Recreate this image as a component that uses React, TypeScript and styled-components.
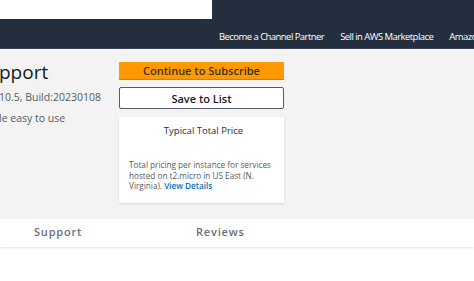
import React from "react";
import styled, { createGlobalStyle } from "styled-components";

const Global = createGlobalStyle`
  html, body { margin: 0; padding: 0; background: #ffffff; }
  body { font-family: "Open Sans", "Liberation Sans", sans-serif; overflow: hidden; }
  * { box-sizing: border-box; }
`;

const Page = styled.div`
  width: 474px;
  height: 281px;
  display: flex;
  flex-direction: column;
  overflow: hidden;
`;

const Header = styled.header`
  height: 49px;
  background: #232f3e;
  display: flex;
  flex-direction: column;
  border-bottom: 1px solid #3a4553;
`;

const SearchBox = styled.div`
  width: 212px;
  height: 19px;
  background: #ffffff;
`;

const Nav = styled.nav`
  flex: 1;
  display: flex;
  align-items: center;
  gap: 16px;
  padding-left: 219px;
  padding-top: 6px;
  white-space: nowrap;
  overflow: hidden;
`;

const NavLink = styled.span`
  color: #ffffff;
  font-size: 9.5px;
  letter-spacing: -0.55px;
`;

const Main = styled.main`
  height: 170px;
  background: #f3f3f3;
  display: flex;
`;

const LeftCol = styled.div`
  width: 119px;
  overflow: hidden;
  display: flex;
  flex-direction: column;
  padding-top: 10px;
`;

const Title = styled.h1`
  margin: 0 0 0 -1px;
  font-size: 19px;
  font-weight: 500;
  color: #16191f;
  line-height: 26px;
  white-space: nowrap;
`;

const Meta = styled.div<{ $top: number }>`
  margin-top: ${(p) => p.$top}px;
  margin-left: -1px;
  font-size: 10.5px;
  color: #545b64;
  line-height: 16px;
  white-space: nowrap;
`;

const RightCol = styled.div`
  width: 165px;
  padding-top: 13px;
  display: flex;
  flex-direction: column;
`;

const PrimaryButton = styled.div`
  height: 18px;
  background: #ff9900;
  border-bottom: 1px solid #ec7211;
  display: flex;
  align-items: center;
  justify-content: center;
  font-size: 11px;
  font-weight: 600;
  color: #3b2f1c;
`;

const SecondaryButton = styled.div`
  margin-top: 7px;
  height: 22px;
  background: #ffffff;
  border: 1px solid #545b64;
  border-radius: 2px;
  display: flex;
  align-items: center;
  justify-content: center;
  font-size: 11px;
  font-weight: 600;
  color: #16191f;
`;

const Card = styled.div`
  margin-top: 8px;
  height: 86px;
  background: #ffffff;
  box-shadow: 0 1px 2px rgba(0, 0, 0, 0.12);
  padding: 7px 6px 0 10px;
  display: flex;
  flex-direction: column;
`;

const CardTitle = styled.div`
  text-align: center;
  font-size: 9.5px;
  color: #232f3e;
  line-height: 14px;
`;

const CardText = styled.div`
  margin-top: 22px;
  font-size: 8.2px;
  line-height: 10.5px;
  color: #545b64;
`;

const LinkText = styled.span`
  color: #0073bb;
  font-weight: 600;
`;

const TabBar = styled.div`
  height: 28px;
  padding-bottom: 3px;
  background: #ffffff;
  box-shadow: 0 1px 2px rgba(0, 0, 0, 0.1);
  display: flex;
  align-items: center;
`;

const Tab = styled.span<{ $w: number }>`
  width: ${(p) => p.$w}px;
  font-size: 11px;
  font-weight: 600;
  letter-spacing: 0.8px;
  color: #687078;
`;

export default function App() {
  return (
    <>
      <Global />
      <Page>
        <Header>
          <SearchBox />
          <Nav>
            <NavLink>Become a Channel Partner</NavLink>
            <NavLink>Sell in AWS Marketplace</NavLink>
            <NavLink>Amazon Web Services Home</NavLink>
          </Nav>
        </Header>
        <Main>
          <LeftCol>
            <Title>pport</Title>
            <Meta $top={4}>10.5, Build:20230108</Meta>
            <Meta $top={5}>le easy to use</Meta>
          </LeftCol>
          <RightCol>
            <PrimaryButton>Continue to Subscribe</PrimaryButton>
            <SecondaryButton>Save to List</SecondaryButton>
            <Card>
              <CardTitle>Typical Total Price</CardTitle>
              <CardText>
                Total pricing per instance for services hosted on t2.micro in US East (N.
                Virginia). <LinkText>View Details</LinkText>
              </CardText>
            </Card>
          </RightCol>
        </Main>
        <TabBar>
          <Tab $w={34} />
          <Tab $w={162}>Support</Tab>
          <Tab $w={100}>Reviews</Tab>
        </TabBar>
      </Page>
    </>
  );
}
